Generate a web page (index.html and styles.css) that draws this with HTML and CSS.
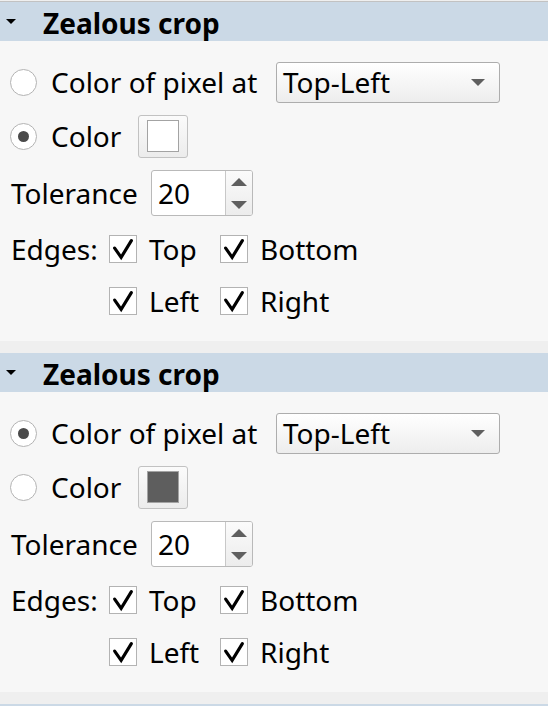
FILE: index.html
```html
<!DOCTYPE html>
<html lang="en">
<head>
  <meta charset="UTF-8" />
  <title>Zealous crop</title>
  <link rel="stylesheet" href="styles.css">
</head>
<body>
  <div class="panel">

    <div class="section">
      <div class="section-header">
        <span class="expander"></span>
        <h2>Zealous crop</h2>
      </div>
      <div class="section-body">
        <div class="row">
          <label class="radio-label">
            <span class="radio"></span>
            Color of pixel at
          </label>
          <div class="combo">
            <span>Top-Left</span>
            <span class="combo-arrow"></span>
          </div>
        </div>
        <div class="row">
          <label class="radio-label short">
            <span class="radio checked"></span>
            Color
          </label>
          <div class="color-button">
            <span class="swatch white"></span>
          </div>
        </div>
        <div class="row tall">
          <span class="field-label">Tolerance</span>
          <div class="spin">
            <span class="spin-value">20</span>
            <span class="spin-buttons">
              <span class="spin-up"></span>
              <span class="spin-down"></span>
            </span>
          </div>
        </div>
        <div class="edges">
          <span class="edges-label">Edges:</span>
          <label class="check"><svg class="checkbox" viewBox="0 0 28 28"><path d="M5 13 L12 23 L23 5" /></svg>Top</label>
          <label class="check"><svg class="checkbox" viewBox="0 0 28 28"><path d="M5 13 L12 23 L23 5" /></svg>Bottom</label>
          <span></span>
          <label class="check"><svg class="checkbox" viewBox="0 0 28 28"><path d="M5 13 L12 23 L23 5" /></svg>Left</label>
          <label class="check"><svg class="checkbox" viewBox="0 0 28 28"><path d="M5 13 L12 23 L23 5" /></svg>Right</label>
        </div>
      </div>
    </div>

    <div class="section">
      <div class="section-header">
        <span class="expander"></span>
        <h2>Zealous crop</h2>
      </div>
      <div class="section-body">
        <div class="row">
          <label class="radio-label">
            <span class="radio checked"></span>
            Color of pixel at
          </label>
          <div class="combo">
            <span>Top-Left</span>
            <span class="combo-arrow"></span>
          </div>
        </div>
        <div class="row">
          <label class="radio-label short">
            <span class="radio"></span>
            Color
          </label>
          <div class="color-button">
            <span class="swatch dark"></span>
          </div>
        </div>
        <div class="row tall">
          <span class="field-label">Tolerance</span>
          <div class="spin">
            <span class="spin-value">20</span>
            <span class="spin-buttons">
              <span class="spin-up"></span>
              <span class="spin-down"></span>
            </span>
          </div>
        </div>
        <div class="edges">
          <span class="edges-label">Edges:</span>
          <label class="check"><svg class="checkbox" viewBox="0 0 28 28"><path d="M5 13 L12 23 L23 5" /></svg>Top</label>
          <label class="check"><svg class="checkbox" viewBox="0 0 28 28"><path d="M5 13 L12 23 L23 5" /></svg>Bottom</label>
          <span></span>
          <label class="check"><svg class="checkbox" viewBox="0 0 28 28"><path d="M5 13 L12 23 L23 5" /></svg>Left</label>
          <label class="check"><svg class="checkbox" viewBox="0 0 28 28"><path d="M5 13 L12 23 L23 5" /></svg>Right</label>
        </div>
      </div>
    </div>

    <div class="section">
      <div class="section-header"></div>
    </div>

  </div>
</body>
</html>
```

FILE: styles.css
```css
:root {
  --header: #cbd9e6;
  --surface: #f7f7f7;
  --gap: #efefef;
  --border: #b3b3b3;
  --text: #000000;
  --arrow: #5f5f5f;
}

* {
  box-sizing: border-box;
  margin: 0;
  padding: 0;
}

body {
  width: 548px;
  height: 706px;
  overflow: hidden;
  background-color: var(--gap);
  font-family: 'Noto Sans', 'Open Sans', sans-serif;
  font-size: 28px;
  color: var(--text);
}

.panel {
  margin-top: 1px;
  border-top: 1px solid #c2c2c2;
}

.section {
  padding-bottom: 12px;
}

.section-header {
  height: 39px;
  display: flex;
  align-items: center;
  background-color: var(--header);
}

.expander {
  width: 0;
  height: 0;
  margin-left: 6px;
  margin-right: 27px;
  border-left: 5.5px solid transparent;
  border-right: 5.5px solid transparent;
  border-top: 5px solid #000;
}

h2 {
  font-size: 28px;
  font-weight: 700;
  line-height: 1;
  padding-top: 3px;
}

.section-body {
  height: 300px;
  padding: 14px 0 14px 0;
  background-color: var(--surface);
}

.row {
  height: 54px;
  display: flex;
  align-items: center;
}

.row.tall {
  height: 60px;
}

.radio-label {
  width: 276px;
  display: flex;
  align-items: center;
}

.radio-label.short {
  width: 138px;
}

.radio {
  width: 27px;
  height: 27px;
  margin-left: 10px;
  margin-right: 14px;
  border: 1px solid var(--border);
  border-radius: 50%;
  background-color: #fff;
  display: flex;
  align-items: center;
  justify-content: center;
}

.radio.checked::after {
  content: "";
  width: 11px;
  height: 11px;
  border-radius: 50%;
  background-color: #4a4a4a;
}

.combo {
  width: 224px;
  height: 41px;
  padding: 0 14px 0 6px;
  display: flex;
  align-items: center;
  justify-content: space-between;
  border: 1px solid #adadad;
  border-radius: 3px;
  background: linear-gradient(#ffffff, #ededed);
}

.combo-arrow {
  width: 0;
  height: 0;
  border-left: 7px solid transparent;
  border-right: 7px solid transparent;
  border-top: 7px solid var(--arrow);
}

.color-button {
  width: 50px;
  height: 43px;
  display: flex;
  align-items: center;
  justify-content: center;
  border: 1px solid #c2c2c2;
  border-radius: 3px;
  background: linear-gradient(#fbfbfb, #ececec);
}

.swatch {
  width: 32px;
  height: 32px;
  border: 1px solid #a3a3a3;
}

.swatch.white {
  background-color: #ffffff;
}

.swatch.dark {
  background-color: #5e5e5e;
}

.field-label {
  width: 151px;
  padding-left: 11px;
}

.spin {
  width: 102px;
  height: 46px;
  display: flex;
  border: 1px solid #b9b9b9;
  border-radius: 3px;
  background-color: #fff;
  overflow: hidden;
}

.spin-value {
  flex: 1;
  padding-left: 6px;
  display: flex;
  align-items: center;
}

.spin-buttons {
  width: 27px;
  display: flex;
  flex-direction: column;
  align-items: center;
  justify-content: center;
  gap: 15px;
  border-left: 1px solid #c8c8c8;
  background: linear-gradient(#fbfbfb, #ececec);
}

.spin-up {
  width: 0;
  height: 0;
  border-left: 8px solid transparent;
  border-right: 8px solid transparent;
  border-bottom: 8px solid var(--arrow);
}

.spin-down {
  width: 0;
  height: 0;
  border-left: 8px solid transparent;
  border-right: 8px solid transparent;
  border-top: 8px solid var(--arrow);
}

.edges {
  display: grid;
  grid-template-columns: 109px 111px auto;
  grid-auto-rows: 52px;
  align-items: center;
}

.edges-label {
  padding-left: 11px;
}

.check {
  display: flex;
  align-items: center;
  gap: 12px;
}

.checkbox {
  width: 28px;
  height: 28px;
  border: 1px solid var(--border);
  background-color: #fff;
}

.checkbox path {
  fill: none;
  stroke: #000;
  stroke-width: 3.4;
  stroke-linecap: round;
  stroke-linejoin: miter;
}
```
